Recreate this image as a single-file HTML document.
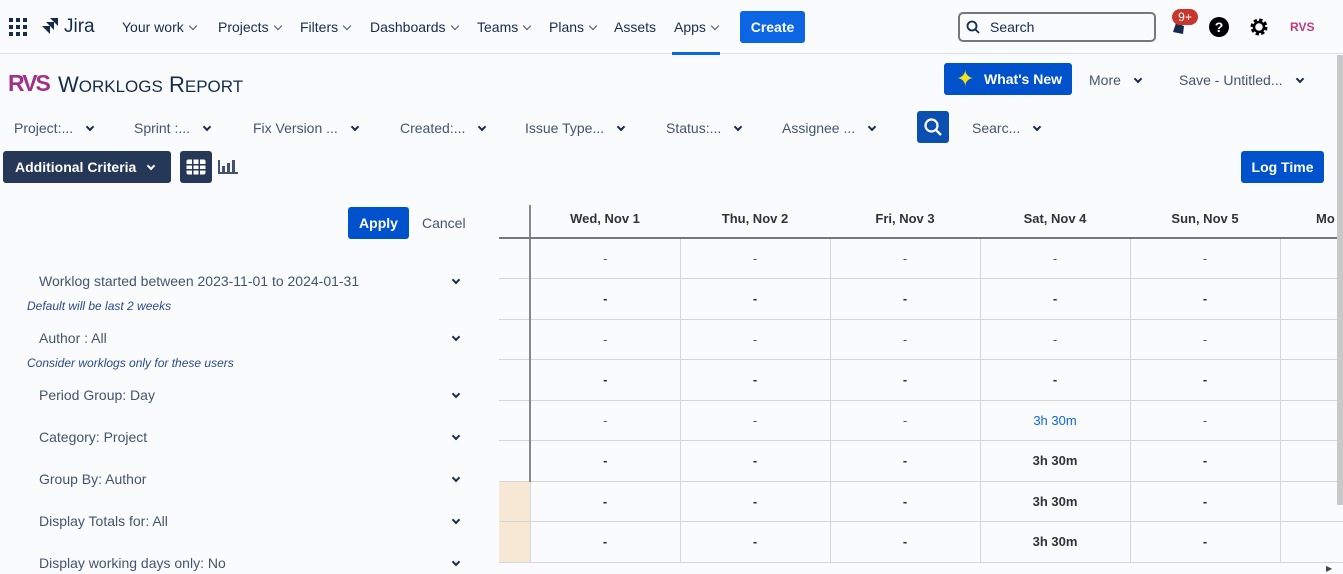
<!DOCTYPE html><html><head><style>
*{box-sizing:border-box;margin:0;padding:0}
body{width:1343px;height:574px;overflow:hidden;background:#fafbfd;font-family:"Liberation Sans",sans-serif;color:#172b4d;position:relative}
.a{position:absolute;white-space:nowrap}
.nav{font-size:14px;color:#172b4d;top:19px}
.chev{display:inline-block;width:6px;height:6px;border-right:1.5px solid #44546f;border-bottom:1.5px solid #44546f;transform:rotate(45deg);margin-left:6px;vertical-align:3px}
.f{font-size:14px;color:#44546f;top:120px}
.f .chev{margin-left:14px;border-color:#172b4d;border-width:2px}
.li{font-size:14px;color:#44546f;left:39px}
.lc{position:absolute;left:409px;top:4px}
.note{font-size:12px;font-style:italic;color:#2a4a8a;left:27px}
table{position:absolute;left:499px;top:200px;border-collapse:collapse;font-size:13px;table-layout:fixed;width:844px}
td,th{text-align:center;border:1px solid #d6d6d6;height:40.5px;overflow:hidden}
th{border:none;border-bottom:2px solid #777;height:38px;font-size:13px;color:#333}
td.fz,th.fz{border-right:2px solid #888;border-left:none}
th.fz{border-right:none}
td{color:#44546f}
td.b{font-weight:bold;color:#333}
td.bl{color:#0c66e4}
tr.o td.fz{background:#f7e8d6;border-right:1px solid #d6d6d6}
</style></head><body>
<div class="a" style="left:0;top:0;width:1343px;height:54px;border-bottom:1px solid #dcdfe4"></div>
<svg class="a" style="left:9px;top:18px" width="18" height="18"><g fill="#172b4d"><rect x="0" y="0" width="4" height="4"/><rect x="7" y="0" width="4" height="4"/><rect x="14" y="0" width="4" height="4"/><rect x="0" y="7" width="4" height="4"/><rect x="7" y="7" width="4" height="4"/><rect x="14" y="7" width="4" height="4"/><rect x="0" y="14" width="4" height="4"/><rect x="7" y="14" width="4" height="4"/><rect x="14" y="14" width="4" height="4"/></g></svg>
<svg class="a" style="left:40px;top:17px" width="20" height="18"><path d="M10 1h8v8zM6 5h8v8zM2 9h8v8z" fill="#172b4d"/></svg>
<div class="a" style="left:64px;top:16px;font-size:19px;color:#172b4d">Jira</div>
<div class="a nav" style="left:122px">Your work<span class="chev"></span></div>
<div class="a nav" style="left:218px">Projects<span class="chev"></span></div>
<div class="a nav" style="left:300px">Filters<span class="chev"></span></div>
<div class="a nav" style="left:370px">Dashboards<span class="chev"></span></div>
<div class="a nav" style="left:477px">Teams<span class="chev"></span></div>
<div class="a nav" style="left:549px">Plans<span class="chev"></span></div>
<div class="a nav" style="left:614px">Assets</div>
<div class="a nav" style="left:674px">Apps<span class="chev"></span></div>
<div class="a" style="left:672px;top:52px;width:48px;height:3px;background:#0c66e4"></div>
<div class="a" style="left:740px;top:11px;width:65px;height:32px;background:#0c66e4;border-radius:3px;color:#fff;font-weight:bold;font-size:14px;text-align:center;line-height:32px">Create</div>
<div class="a" style="left:958px;top:12px;width:198px;height:30px;border:2px solid #777;border-radius:5px;font-size:14px;padding-left:30px;line-height:26px;color:#172b4d">Search</div>
<svg class="a" style="left:966px;top:20px" width="14" height="14"><circle cx="6" cy="6" r="4.5" stroke="#172b4d" stroke-width="1.8" fill="none"/><path d="M9.5 9.5L13 13" stroke="#172b4d" stroke-width="1.8"/></svg>
<svg class="a" style="left:1170px;top:18px" width="20" height="18"><path d="M3 14l3-9 8 3-1 8z" fill="#172b4d"/></svg>
<div class="a" style="left:1172px;top:9px;width:26px;height:16px;background:#c9372c;border-radius:8px;color:#fff;font-size:12px;text-align:center;line-height:16px">9+</div>
<svg class="a" style="left:1208px;top:16px" width="22" height="22"><circle cx="11" cy="11" r="10" fill="#000"/><text x="11" y="16" font-size="14" font-weight="bold" fill="#fff" text-anchor="middle" font-family="Liberation Sans">?</text></svg>
<svg class="a" style="left:1248px;top:16px" width="22" height="22"><circle cx="11" cy="11" r="6.5" stroke="#000" stroke-width="4" fill="none" stroke-dasharray="3 2.1"/><circle cx="11" cy="11" r="5" stroke="#000" stroke-width="2.5" fill="none"/></svg>
<div class="a" style="left:1290px;top:20px;font-size:12px;font-weight:bold;color:#c0397e">RVS</div>

<div class="a" style="left:8px;top:70px;font-size:23px;font-weight:bold;color:#a0308a;letter-spacing:-2px">RVS</div>
<div class="a" style="left:58px;top:72px;font-size:22px;color:#172b4d">W<span style="font-size:17px">ORKLOGS</span> R<span style="font-size:17px">EPORT</span></div>
<div class="a" style="left:944px;top:63px;width:128px;height:32px;background:#0052cc;border-radius:3px;color:#fff;font-weight:bold;font-size:14px;line-height:32px;padding-left:40px">What's New</div>
<div class="a" style="left:956px;top:66px;font-size:22px;color:#f5e11b">✦</div>
<div class="a" style="left:1089px;top:72px;font-size:14px;color:#44546f">More<span class="chev" style="margin-left:14px;border-color:#172b4d;border-width:2px"></span></div>
<div class="a" style="left:1179px;top:72px;font-size:14px;color:#44546f">Save - Untitled...<span class="chev" style="margin-left:14px;border-color:#172b4d;border-width:2px"></span></div>

<div class="a f" style="left:14px">Project:...<span class="chev"></span></div>
<div class="a f" style="left:134px">Sprint :...<span class="chev"></span></div>
<div class="a f" style="left:253px">Fix Version ...<span class="chev"></span></div>
<div class="a f" style="left:400px">Created:...<span class="chev"></span></div>
<div class="a f" style="left:525px">Issue Type...<span class="chev"></span></div>
<div class="a f" style="left:666px">Status:...<span class="chev"></span></div>
<div class="a f" style="left:782px">Assignee ...<span class="chev"></span></div>
<div class="a" style="left:917px;top:111px;width:32px;height:32px;background:#0b4fb0;border-radius:3px"></div>
<svg class="a" style="left:923px;top:117px" width="20" height="20"><circle cx="8.5" cy="8.5" r="6" stroke="#fff" stroke-width="2.2" fill="none"/><path d="M13 13l5 5" stroke="#fff" stroke-width="2.4"/></svg>
<div class="a f" style="left:972px">Searc...<span class="chev"></span></div>

<div class="a" style="left:3px;top:151px;width:168px;height:32px;background:#253858;border-radius:3px;color:#fff;font-weight:bold;font-size:14px;line-height:32px;padding-left:12px">Additional Criteria<span class="chev" style="border-color:#fff;border-width:2px;margin-left:12px"></span></div>
<div class="a" style="left:180px;top:151px;width:32px;height:32px;background:#253858;border-radius:3px"></div>
<svg class="a" style="left:186px;top:159px" width="20" height="16"><rect x="0.5" y="0.5" width="19" height="15" rx="2" fill="#fff"/><g fill="#253858"><rect x="6" y="0" width="1.5" height="16"/><rect x="12.5" y="0" width="1.5" height="16"/><rect x="0" y="5" width="20" height="1.5"/><rect x="0" y="10" width="20" height="1.5"/></g></svg>
<svg class="a" style="left:218px;top:158px" width="20" height="16"><g fill="#44546f"><rect x="0" y="2" width="2" height="14"/><rect x="0" y="14" width="20" height="2"/><rect x="4" y="8" width="3" height="6"/><rect x="9" y="5" width="3" height="9"/><rect x="14" y="2" width="3" height="12"/></g></svg>
<div class="a" style="left:1241px;top:151px;width:83px;height:32px;background:#0052cc;border-radius:3px;color:#fff;font-weight:bold;font-size:14px;text-align:center;line-height:32px">Log Time</div>

<div class="a" style="left:348px;top:207px;width:61px;height:32px;background:#0052cc;border-radius:3px;color:#fff;font-weight:bold;font-size:14px;text-align:center;line-height:32px">Apply</div>
<div class="a" style="left:422px;top:215px;font-size:14px;color:#44546f">Cancel</div>

<div class="a li" style="top:273px">Worklog started between 2023-11-01 to 2024-01-31</div>
<div class="a note" style="top:299px">Default will be last 2 weeks</div>
<div class="a li" style="top:330px">Author : All</div>
<div class="a note" style="top:356px">Consider worklogs only for these users</div>
<div class="a li" style="top:387px">Period Group: Day</div>
<div class="a li" style="top:429px">Category: Project</div>
<div class="a li" style="top:471px">Group By: Author</div>
<div class="a li" style="top:513px">Display Totals for: All</div>
<div class="a li" style="top:555px">Display working days only: No</div>
<div class="a chev" style="left:447px;top:277px;border-color:#172b4d;border-width:2px"></div>
<div class="a chev" style="left:447px;top:334px;border-color:#172b4d;border-width:2px"></div>
<div class="a chev" style="left:447px;top:391px;border-color:#172b4d;border-width:2px"></div>
<div class="a chev" style="left:447px;top:433px;border-color:#172b4d;border-width:2px"></div>
<div class="a chev" style="left:447px;top:475px;border-color:#172b4d;border-width:2px"></div>
<div class="a chev" style="left:447px;top:517px;border-color:#172b4d;border-width:2px"></div>
<div class="a chev" style="left:447px;top:559px;border-color:#172b4d;border-width:2px"></div>

<table>
<colgroup><col style="width:31px"><col style="width:150px"><col style="width:150px"><col style="width:150px"><col style="width:150px"><col style="width:150px"><col style="width:63px"></colgroup>
<tr><th class="fz"></th><th>Wed, Nov 1</th><th>Thu, Nov 2</th><th>Fri, Nov 3</th><th>Sat, Nov 4</th><th>Sun, Nov 5</th><th style="text-align:left;padding-left:36px">Mo</th></tr>
<tr><td class="fz"></td><td>-</td><td>-</td><td>-</td><td>-</td><td>-</td><td></td></tr>
<tr><td class="fz"></td><td class="b">-</td><td class="b">-</td><td class="b">-</td><td class="b">-</td><td class="b">-</td><td></td></tr>
<tr><td class="fz"></td><td>-</td><td>-</td><td>-</td><td>-</td><td>-</td><td></td></tr>
<tr><td class="fz"></td><td class="b">-</td><td class="b">-</td><td class="b">-</td><td class="b">-</td><td class="b">-</td><td></td></tr>
<tr><td class="fz"></td><td>-</td><td>-</td><td>-</td><td class="bl">3h 30m</td><td>-</td><td></td></tr>
<tr><td class="fz"></td><td class="b">-</td><td class="b">-</td><td class="b">-</td><td class="b">3h 30m</td><td class="b">-</td><td></td></tr>
<tr class="o"><td class="fz"></td><td class="b">-</td><td class="b">-</td><td class="b">-</td><td class="b">3h 30m</td><td class="b">-</td><td></td></tr>
<tr class="o"><td class="fz"></td><td class="b">-</td><td class="b">-</td><td class="b">-</td><td class="b">3h 30m</td><td class="b">-</td><td></td></tr>
</table>
<div class="a" style="left:529px;top:205px;width:2px;height:33px;background:#888"></div>
<div class="a" style="left:1337px;top:55px;width:6px;height:450px;background:#c8c8c8"></div>
<div class="a" style="left:1326px;top:564px;font-size:8px;color:#444">▶</div>
</body></html>
